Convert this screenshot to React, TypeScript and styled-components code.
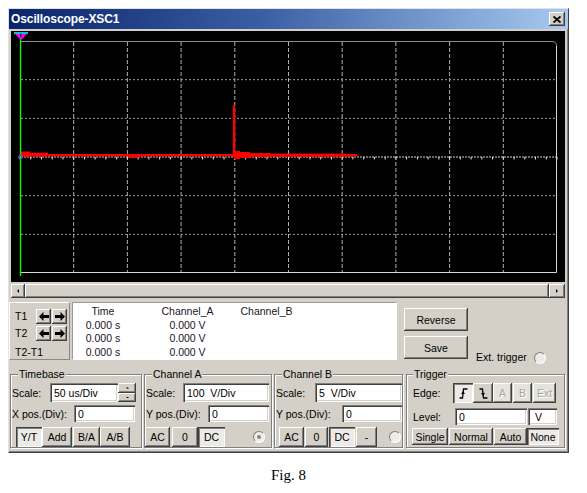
import React from 'react';
import styled, {createGlobalStyle} from 'styled-components';

const Global = createGlobalStyle`
  html, body { margin: 0; padding: 0; background: #fff; }
  body { font-family: "Liberation Sans", Arial, sans-serif; font-size: 10.5px; color: #000; }
`

const Page = styled.div`
  width: 587px;
  height: 493px;
  box-sizing: border-box;
  padding: 8px 0 0 8px;
`

const Window = styled.div`
  width: 561px;
  height: 445px;
  box-sizing: border-box;
  background: #d4d0c8;
  border: 1px solid;
  border-color: #e4e2dc #404040 #404040 #e4e2dc;
  box-shadow: inset -1px -1px #808080;
  display: flex;
  flex-direction: column;
`

const TitleBar = styled.div`
  height: 20px;
  flex: none;
  display: flex;
  align-items: center;
  justify-content: space-between;
  padding: 0 3px 0 2px;
  background: linear-gradient(to right, #0a246a, #3a5ea4 45%, #a6caf0);
`

const Title = styled.span`
  color: #fff;
  font-weight: bold;
  font-size: 12px;
  letter-spacing: -0.1px;
`

const Raised = `
  background: #d4d0c8;
  box-shadow: inset -1px -1px #404040, inset 1px 1px #fff, inset -2px -2px #808080;
`

const CloseButton = styled.div`
  width: 16px;
  height: 14px;
  ${Raised}
  display: flex;
  align-items: center;
  justify-content: center;
`

const Screen = styled.div`
  height: 251px;
  margin: 2px 3px 0 2px;
  background: #000;
  flex: none;
  svg { display: block; }
`

const ScrollBar = styled.div`
  height: 14px;
  margin: 2px 3px 0 2px;
  display: flex;
  flex: none;
`

const ScrollArrow = styled.div<{ $w: number }>`
  width: ${p => p.$w}px;
  ${Raised}
  display: flex;
  align-items: center;
  justify-content: center;
`

const ScrollThumb = styled.div`
  flex: 1;
  ${Raised}
`

const CursorRow = styled.div`
  display: flex;
  height: 58px;
  margin-top: 4px;
  flex: none;
`

const CursorBox = styled.div`
  width: 61px;
  box-sizing: border-box;
  border: 1px solid;
  border-color: #fff #8c8a84 #8c8a84 #fff;
  padding: 6px 0 0 5px;
  display: grid;
  grid-template-columns: 20px 15px 15px;
  grid-auto-rows: 15px;
  column-gap: 1px;
  row-gap: 2px;
  align-items: center;
`

const CursorLabel = styled.span`
  line-height: 11px;
`

const DiffLabel = styled.span`
  grid-column: 1 / -1;
  line-height: 11px;
  align-self: start;
  margin-top: 4px;
`

const ArrowButton = styled.div`
  width: 15px;
  height: 15px;
  ${Raised}
  display: flex;
  align-items: center;
  justify-content: center;
`

const Readout = styled.div`
  width: 325px;
  margin-left: 2px;
  box-sizing: border-box;
  background: #fff;
  border: 1px solid;
  border-color: #9c9a94 #fff #fff #9c9a94;
  padding-top: 2px;
  display: grid;
  grid-template-columns: 60px 109px 49px;
  grid-auto-rows: 13.5px;
  justify-items: center;
  align-items: center;
  line-height: 13px;
  color: #1a1426;
`

const SideButtons = styled.div`
  display: flex;
  flex-direction: column;
  gap: 5px;
  padding-top: 6px;
  margin-left: 7px;
`

const Btn = styled.div<{ $w: number; $h?: number; $ml?: number; $pressed?: boolean; $off?: boolean }>`
  width: ${p => p.$w}px;
  height: ${p => p.$h ?? 20}px;
  margin-left: ${p => p.$ml ?? 0}px;
  flex: none;
  box-sizing: border-box;
  display: flex;
  align-items: center;
  justify-content: center;
  white-space: nowrap;
  color: ${p => (p.$off ? '#a7a49d' : '#000')};
  text-shadow: ${p => (p.$off ? '1px 1px #fff' : 'none')};
  background: ${p => (p.$pressed ? '#ecebe7' : p.$off ? '#e4e2dd' : '#d4d0c8')};
  box-shadow: ${p =>
    p.$pressed
      ? 'inset 1px 1px #404040, inset 2px 2px #808080, inset -1px -1px #fff'
      : 'inset -1px -1px #404040, inset 1px 1px #fff, inset -2px -2px #808080'};
`

const ExtTrigger = styled.div`
  display: flex;
  align-items: center;
  align-self: flex-end;
  margin: 0 0 -4px 8px;
  line-height: 13px;
  gap: 7px;
`

const Radio = styled.span<{ $checked?: boolean; $ml?: number }>`
  width: 12px;
  height: 12px;
  margin-left: ${p => p.$ml ?? 0}px;
  flex: none;
  box-sizing: border-box;
  border-radius: 50%;
  border: 1px solid;
  border-color: #808080 #fff #fff #808080;
  background: #eeece8;
  display: inline-flex;
  align-items: center;
  justify-content: center;
  &::after {
    content: '';
    width: 4px;
    height: 4px;
    border-radius: 50%;
    background: ${p => (p.$checked ? '#8a8780' : 'transparent')};
  }
`

const Groups = styled.div`
  display: flex;
  margin-top: 8px;
  padding-left: 1px;
  align-items: stretch;
`

const Group = styled.fieldset<{ $w: number; $ml?: number }>`
  width: ${p => p.$w}px;
  min-width: 0;
  box-sizing: border-box;
  margin: 0 0 0 ${p => p.$ml ?? 0}px;
  padding: 0 0 0 1px;
  border: 1px solid #808080;
  box-shadow: inset 1px 1px #fff, 1px 1px #fff;
`

const Legend = styled.legend<{ $ml?: number }>`
  margin-left: ${p => p.$ml ?? 6}px;
  padding: 0 1px;
  line-height: 13px;
  background: #d4d0c8;
`

const Row = styled.div<{ $mt: number }>`
  display: flex;
  align-items: center;
  margin-top: ${p => p.$mt}px;
`

const Label = styled.span<{ $w: number; $ml?: number }>`
  width: ${p => p.$w}px;
  margin-left: ${p => p.$ml ?? 0}px;
  flex: none;
  white-space: nowrap;
`

const Field = styled.input<{ $w: number; $h?: number; $ml?: number; $pl?: number }>`
  width: ${p => p.$w}px;
  height: ${p => p.$h ?? 17}px;
  margin: 0 0 0 ${p => p.$ml ?? 0}px;
  flex: none;
  box-sizing: border-box;
  border: none;
  outline: none;
  background: #fff;
  padding: 0 0 0 ${p => p.$pl ?? 4}px;
  font: 10.5px "Liberation Sans", Arial, sans-serif;
  color: #000;
  box-shadow: inset 1px 1px #808080, inset 2px 2px #404040, inset -1px -1px #fff, inset -2px -2px #d4d0c8;
`

const Spinner = styled.div`
  width: 18px;
  height: 19px;
  display: flex;
  flex-direction: column;
  flex: none;
`

const SpinHalf = styled.div`
  flex: 1;
  ${Raised}
  display: flex;
  align-items: center;
  justify-content: center;
`

const Caption = styled.div`
  width: 561px;
  margin-top: 14px;
  text-align: center;
  font-family: "Liberation Serif", "Times New Roman", serif;
  font-size: 15px;
`

const GRID_X = Array.from({length: 9}, (_, i) => 20 + 53.7 * (i + 1));
const GRID_Y = Array.from({length: 5}, (_, i) => 41 + 38.67 * (i + 1));
const TICKS = Array.from({length: 51}, (_, i) => 20 + 10.74 * i);

const Scope = () => (
  <svg width="554" height="251" viewBox="11 31 554 251">
    {GRID_X.map(x => (
      <line key={x} x1={x} x2={x} y1={42} y2={272} stroke="#b0b0b0" strokeDasharray="4 2" />
    ))}
    {GRID_Y.map((y, i) =>
      i === 2 ? null : (
        <line key={y} x1={21} x2={556} y1={y} y2={y} stroke="#9c9c9c" strokeDasharray="2 2" />
      )
    )}
    <line x1={21} x2={556} y1={157} y2={157} stroke="#d8d8d8" strokeDasharray="2 1" />
    {TICKS.map(x => (
      <line key={x} x1={x} x2={x} y1={157} y2={159.5} stroke="#e8e8e8" />
    ))}
    <path d="M20.5 273 V41.5 H552 Q556.5 41.5 556.5 46" fill="none" stroke="#8c8c8c" />
    <path d="M556.5 46 V272.5 H20.5" fill="none" stroke="#d8d8d8" />
    <g fill="#ff0000">
      <rect x={20} y={154} width={337} height={2.4} />
      <rect x={20} y={151.5} width={10} height={5} />
      <rect x={30} y={152.8} width={18} height={3.6} />
      <rect x={128} y={155} width={12} height={2.6} />
      <rect x={232.8} y={105} width={2.4} height={52} />
      <rect x={234} y={151} width={6} height={8} />
      <rect x={240} y={152} width={10} height={6} />
      <rect x={250} y={153} width={20} height={4} />
      <rect x={270} y={153.6} width={75} height={3} />
    </g>
    <line x1={20.5} x2={20.5} y1={34} y2={276} stroke="#00ff00" strokeWidth={1.4} />
    <rect x={14} y={32} width={14} height={2} fill="#00c8c8" />
    <polygon points="15,34 27,34 21,40" fill="#ff00ff" />
    <rect x={20} y={33.5} width={1.5} height={4} fill="#303030" />
    <circle cx={20.5} cy={157} r={2} fill="none" stroke="#8040ff" />
  </svg>
);

const Arrow = ({dir}: { dir: 'left' | 'right' }) => (
  <svg width="10" height="9" viewBox="0 0 10 9">
    <polygon
      points={
        dir === 'left'
          ? '0,4.5 4.5,0 4.5,3 10,3 10,6 4.5,6 4.5,9'
          : '10,4.5 5.5,0 5.5,3 0,3 0,6 5.5,6 5.5,9'
      }
      fill="#000"
    />
  </svg>
);

const Tri = ({dir, size = 3}: { dir: 'left' | 'right' | 'up' | 'down'; size?: number }) => {
  const s = size;
  const pts = {
    left: `${s},0 ${s},${2 * s} 0,${s}`,
    right: `0,0 0,${2 * s} ${s},${s}`,
    up: `0,${s} ${2 * s},${s} ${s},0`,
    down: `0,0 ${2 * s},0 ${s},${s}`,
  }[dir];
  const w = dir === 'left' || dir === 'right' ? s : 2 * s;
  const h = dir === 'left' || dir === 'right' ? 2 * s : s;
  return (
    <svg width={w} height={h} viewBox={`0 0 ${w} ${h}`}>
      <polygon points={pts} fill="#000" />
    </svg>
  );
};

const Edge = ({rising}: { rising?: boolean }) => (
  <svg width="9" height="11" viewBox="0 0 9 11">
    <polyline
      points={rising ? '0.5,10 3.5,10 4.5,1 8.5,1' : '0.5,1 3.5,1 4.5,10 8.5,10'}
      fill="none"
      stroke="#000"
      strokeWidth={1.3}
    />
    <polygon points={rising ? '2,6 6,6 4.2,3' : '2,5 6,5 4.2,8'} fill="#000" />
  </svg>
);

export default function App() {
  return (
    <Page>
      <Global />
      <Window>
        <TitleBar>
          <Title>Oscilloscope-XSC1</Title>
          <CloseButton>
            <svg width="8" height="7" viewBox="0 0 8 7">
              <path d="M0.5 0.5 L7.5 6.5 M7.5 0.5 L0.5 6.5" stroke="#000" strokeWidth={1.8} />
            </svg>
          </CloseButton>
        </TitleBar>

        <Screen>
          <Scope />
        </Screen>

        <ScrollBar>
          <ScrollArrow $w={14}><Tri dir="left" size={2} /></ScrollArrow>
          <ScrollThumb />
          <ScrollArrow $w={16}><Tri dir="right" size={2} /></ScrollArrow>
        </ScrollBar>

        <CursorRow>
          <CursorBox>
            <CursorLabel>T1</CursorLabel>
            <ArrowButton><Arrow dir="left" /></ArrowButton>
            <ArrowButton><Arrow dir="right" /></ArrowButton>
            <CursorLabel>T2</CursorLabel>
            <ArrowButton><Arrow dir="left" /></ArrowButton>
            <ArrowButton><Arrow dir="right" /></ArrowButton>
            <DiffLabel>T2-T1</DiffLabel>
          </CursorBox>
          <Readout>
            <span>Time</span><span>Channel_A</span><span>Channel_B</span>
            <span>0.000 s</span><span>0.000 V</span><span />
            <span>0.000 s</span><span>0.000 V</span><span />
            <span>0.000 s</span><span>0.000 V</span><span />
          </Readout>
          <SideButtons>
            <Btn $w={64} $h={23}>Reverse</Btn>
            <Btn $w={64} $h={23}>Save</Btn>
          </SideButtons>
          <ExtTrigger>
            Ext. trigger
            <Radio />
          </ExtTrigger>
        </CursorRow>

        <Groups>
          <Group $w={132}>
            <Legend>Timebase</Legend>
            <Row $mt={2}>
              <Label $w={38}>Scale:</Label>
              <Field $w={68} $h={19} value="50 us/Div" readOnly />
              <Spinner>
                <SpinHalf><Tri dir="up" size={1.5} /></SpinHalf>
                <SpinHalf><Tri dir="down" size={1.5} /></SpinHalf>
              </Spinner>
            </Row>
            <Row $mt={3}>
              <Label $w={62}>X pos.(Div):</Label>
              <Field $w={61} value="0" readOnly />
            </Row>
            <Row $mt={5}>
              <Btn $w={26} $ml={4} $pressed>Y/T</Btn>
              <Btn $w={30}>Add</Btn>
              <Btn $w={27} $ml={1}>B/A</Btn>
              <Btn $w={30}>A/B</Btn>
            </Row>
          </Group>

          <Group $w={128} $ml={2}>
            <Legend>Channel A</Legend>
            <Row $mt={2}>
              <Label $w={37}>Scale:</Label>
              <Field $w={86} $h={19} value="100  V/Div" readOnly />
            </Row>
            <Row $mt={3}>
              <Label $w={62}>Y pos.(Div):</Label>
              <Field $w={61} value="0" readOnly />
            </Row>
            <Row $mt={5}>
              <Btn $w={25} $ml={-1}>AC</Btn>
              <Btn $w={26} $ml={2}>0</Btn>
              <Btn $w={27} $pressed>DC</Btn>
              <Radio $ml={28} $checked />
            </Row>
          </Group>

          <Group $w={129} $ml={2}>
            <Legend>Channel B</Legend>
            <Row $mt={2}>
              <Label $w={39}>Scale:</Label>
              <Field $w={87} $h={19} value="5  V/Div" readOnly />
            </Row>
            <Row $mt={3}>
              <Label $w={66}>Y pos.(Div):</Label>
              <Field $w={60} value="0" readOnly />
            </Row>
            <Row $mt={5}>
              <Btn $w={25} $ml={3}>AC</Btn>
              <Btn $w={23} $ml={1}>0</Btn>
              <Btn $w={26} $ml={1} $pressed>DC</Btn>
              <Btn $w={21} $ml={1}>-</Btn>
              <Radio $ml={12} />
            </Row>
          </Group>

          <Group $w={159} $ml={3}>
            <Legend $ml={5}>Trigger</Legend>
            <Row $mt={2}>
              <Label $w={40} $ml={5}>Edge:</Label>
              <Btn $w={20} $pressed><Edge rising /></Btn>
              <Btn $w={20}><Edge /></Btn>
              <Btn $w={19} $off>A</Btn>
              <Btn $w={19} $ml={1} $off>B</Btn>
              <Btn $w={23} $ml={1} $off>Ext</Btn>
            </Row>
            <Row $mt={5}>
              <Label $w={42} $ml={5}>Level:</Label>
              <Field $w={72} value="0" readOnly />
              <Field $w={29} $ml={1} $pl={7} value="V" readOnly />
            </Row>
            <Row $mt={3}>
              <Btn $w={36} $h={17} $ml={4}>Single</Btn>
              <Btn $w={44} $h={17} $ml={1}>Normal</Btn>
              <Btn $w={33} $h={17} $ml={1}>Auto</Btn>
              <Btn $w={32} $h={17} $pressed>None</Btn>
            </Row>
          </Group>
        </Groups>
      </Window>
      <Caption>Fig. 8</Caption>
    </Page>
  );
}
